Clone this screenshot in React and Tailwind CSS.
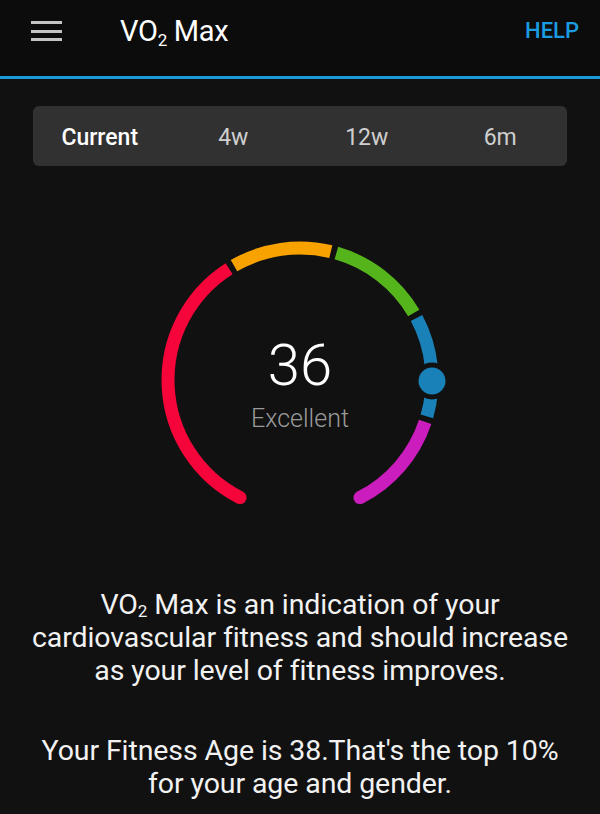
import React from "react";

const CX = 300;
const CY = 214;
const R = 132;

function pt(deg) {
  const t = (deg * Math.PI) / 180;
  return [CX + R * Math.sin(t), CY - R * Math.cos(t)];
}

function arc(a, b) {
  const [x1, y1] = pt(a);
  const [x2, y2] = pt(b);
  const large = b - a > 180 ? 1 : 0;
  return `M ${x1.toFixed(2)} ${y1.toFixed(2)} A ${R} ${R} 0 ${large} 1 ${x2.toFixed(2)} ${y2.toFixed(2)}`;
}

const segs = [
  { a: -153, b: -32.5, c: "#f5053a" },
  { a: -30, b: 13.5, c: "#f8a200" },
  { a: 16, b: 59.5, c: "#55b41b" },
  { a: 62, b: 106, c: "#1a80b8" },
  { a: 108.5, b: 153, c: "#cb1dbd" },
];

function Gauge() {
  const [sx, sy] = pt(-153);
  const [ex, ey] = pt(153);
  const [dx, dy] = pt(90);
  return (
    <svg width="600" height="400" viewBox="0 0 600 400" className="block">
      {segs.map((s, i) => (
        <path key={i} d={arc(s.a, s.b)} stroke={s.c} strokeWidth="13" fill="none" strokeLinecap="butt" />
      ))}
      <circle cx={sx} cy={sy} r="6.5" fill="#f5053a" />
      <circle cx={ex} cy={ey} r="6.5" fill="#cb1dbd" />
      <circle cx={dx} cy={dy + 1} r="18.5" fill="#111111" />
      <circle cx={dx} cy={dy + 1} r="13.5" fill="#1a80b8" />
    </svg>
  );
}

export default function App() {
  return (
    <div className="w-[600px] h-[814px] bg-[#111111] text-white overflow-hidden" style={{ fontFamily: "Roboto, 'Liberation Sans', sans-serif" }}>
      <header className="h-[76px] bg-[#0c0c0c] flex items-center pb-[14px]">
        <div className="ml-[31px] w-[31px] flex flex-col gap-[5.5px]">
          <div className="h-[3px] bg-[#c4c4c4]" />
          <div className="h-[3px] bg-[#c4c4c4]" />
          <div className="h-[3px] bg-[#c4c4c4]" />
        </div>
        <div className="ml-[58px] text-[29px] leading-none tracking-[-0.3px]">
          VO<sub className="text-[17px] leading-none align-baseline relative top-[5px]">2</sub> Max
        </div>
        <div className="ml-auto mr-[21px] text-[22px] font-medium text-[#1b9be0] leading-none">HELP</div>
      </header>
      <div className="h-[3px] bg-[#1a9ad9]" />
      <div className="mx-[33px] mt-[27px] h-[60px] rounded-[6px] bg-[#313131] grid grid-cols-4 items-center text-[23px] pt-[4px]">
        <div className="text-center font-medium text-white">Current</div>
        <div className="text-center text-[#cfcfcf]">4w</div>
        <div className="text-center text-[#cfcfcf]">12w</div>
        <div className="text-center text-[#cfcfcf]">6m</div>
      </div>
      <div className="relative h-[422px]">
        <Gauge />
        <div className="absolute left-0 right-0 top-[170px] flex flex-col items-center">
          <div className="text-[58px] font-light leading-none text-white">36</div>
          <div className="mt-[12px] text-[25px] font-light leading-none text-[#9a9a9a]">Excellent</div>
        </div>
      </div>
      <p className="text-center text-[28.5px] leading-[33px] text-[#f2f2f2] tracking-[-0.1px]">
        VO<sub className="text-[17px] leading-none align-baseline relative top-[3px]">2</sub> Max is an indication of your
        <br />
        cardiovascular fitness and should increase
        <br />
        as your level of fitness improves.
      </p>
      <p className="mt-[47px] text-center text-[28.5px] leading-[33px] text-[#f2f2f2] tracking-[-0.1px]">
        Your Fitness Age is 38.That's the top 10%
        <br />
        for your age and gender.
      </p>
    </div>
  );
}
